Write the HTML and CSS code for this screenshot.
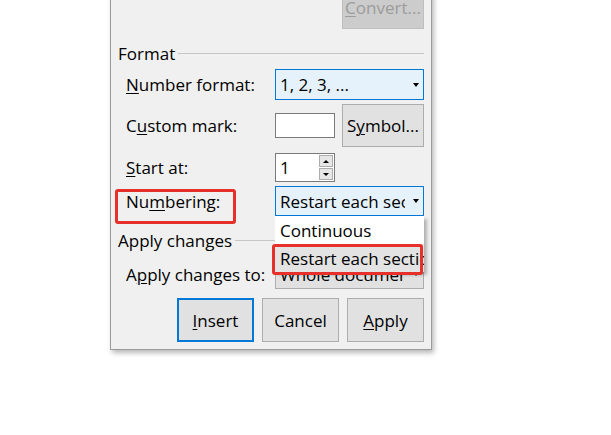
FILE: index.html
```html
<!DOCTYPE html>
<html>
<head>
<meta charset="utf-8">
<link rel="stylesheet" href="styles.css">
</head>
<body>
<div class="dialog">
  <div class="top-row">
    <div class="btn disabled convert"><u>C</u>onvert...</div>
  </div>

  <div class="legend legend-format"><span>Format</span><div class="rule"></div></div>

  <div class="row row-numfmt">
    <div class="label"><u>N</u>umber format:</div>
    <div class="combo active"><span class="combo-text">1, 2, 3, ...</span><span class="arrow"></span></div>
  </div>

  <div class="row row-custom">
    <div class="label">C<u>u</u>stom mark:</div>
    <div class="textbox small"></div>
    <div class="btn symbol">S<u>y</u>mbol...</div>
  </div>

  <div class="row row-start">
    <div class="label"><u>S</u>tart at:</div>
    <div class="spinner">
      <span class="spin-value">1</span>
      <div class="spin-btns">
        <div class="spin-btn"><span class="tri-up"></span></div>
        <div class="spin-btn"><span class="tri-down"></span></div>
      </div>
    </div>
  </div>

  <div class="row row-numbering">
    <div class="label marked">Nu<u>m</u>bering:</div>
    <div class="combo-wrap">
      <div class="combo active"><span class="combo-text">Restart each section</span><span class="arrow"></span></div>
      <div class="dropdown">
        <div class="item">Continuous</div>
        <div class="item selected">Restart each section</div>
        <div class="mark-item"></div>
      </div>
    </div>
  </div>

  <div class="legend legend-apply"><span>Apply changes</span><div class="rule"></div></div>

  <div class="row row-applyto">
    <div class="label">A<u>p</u>ply changes to:</div>
    <div class="combo plain"><span class="combo-text">Whole document</span><span class="arrow"></span></div>
  </div>

  <div class="buttons">
    <div class="btn default"><u>I</u>nsert</div>
    <div class="btn">Cancel</div>
    <div class="btn"><u>A</u>pply</div>
  </div>
</div>
</body>
</html>
```

FILE: styles.css
```css
* { box-sizing: border-box; }

html, body {
  margin: 0;
  padding: 0;
  background: #ffffff;
  overflow: hidden;
}

body {
  font-family: "Open Sans", "Noto Sans", "DejaVu Sans", sans-serif;
  font-size: 17px;
  color: #000000;
  width: 611px;
  height: 435px;
}

u {
  text-decoration: underline;
  text-decoration-thickness: 1px;
  text-underline-offset: 2px;
}

.dialog {
  margin: -16px 0 0 110px;
  width: 322px;
  background: #f0f0f0;
  border: 1px solid #9a9a9a;
  box-shadow: 2px 3px 5px rgba(0, 0, 0, 0.28);
  padding: 0 7px 7px 7px;
}

.top-row {
  display: flex;
  justify-content: flex-end;
}

.btn {
  width: 77px;
  height: 44px;
  display: flex;
  align-items: center;
  justify-content: center;
  background: #e1e1e1;
  border: 1px solid #adadad;
  white-space: nowrap;
}

.btn.disabled {
  background: #cccccc;
  border-color: #bfbfbf;
  color: #9c9c9c;
}

.btn.convert {
  width: 82px;
  height: 44px;
}

.legend {
  display: flex;
  align-items: center;
  height: 24px;
}

.legend .rule {
  flex: 1;
  height: 1px;
  background: #c6c6c6;
  margin-left: 3px;
}

.legend-format { margin-top: 12px; }
.legend-apply { margin-top: 12px; }

.row {
  display: flex;
  align-items: center;
  padding-left: 8px;
}

.label {
  width: 149px;
  height: 100%;
  display: flex;
  align-items: center;
  white-space: nowrap;
  position: relative;
}

.row-numfmt { height: 31px; margin-top: 4px; }
.row-custom { height: 43px; margin-top: 4px; }
.row-start { height: 29px; margin-top: 6px; }
.row-numbering { height: 30px; margin-top: 4px; }
.row-applyto { height: 30px; margin-top: 7px; }

.combo {
  width: 149px;
  height: 100%;
  display: flex;
  align-items: center;
  padding-left: 4px;
  border: 1px solid #adadad;
  background: #e1e1e1;
  position: relative;
}

.combo.active {
  border-color: #0078d7;
  background: #e5f1fb;
}

.combo-text {
  width: 125px;
  overflow: hidden;
  white-space: nowrap;
}

.arrow {
  position: absolute;
  right: 4px;
  top: 50%;
  margin-top: -2px;
  width: 0;
  height: 0;
  border-left: 3.5px solid transparent;
  border-right: 3.5px solid transparent;
  border-top: 4px solid #000000;
}

.textbox {
  background: #ffffff;
  border: 1px solid #7a7a7a;
}

.textbox.small {
  width: 60px;
  height: 25px;
}

.btn.symbol {
  width: 82px;
  height: 43px;
  margin-left: 7px;
}

.spinner {
  width: 60px;
  height: 29px;
  background: #ffffff;
  border: 1px solid #7a7a7a;
  display: flex;
  align-items: center;
  padding-left: 4px;
}

.spin-value {
  flex: 1;
}

.spin-btns {
  width: 14px;
  height: 25px;
  margin-right: 1px;
  display: flex;
  flex-direction: column;
  gap: 1px;
}

.spin-btn {
  flex: 1;
  background: #e6e6e6;
  border: 1px solid #adadad;
  display: flex;
  align-items: center;
  justify-content: center;
}

.tri-up {
  width: 0;
  height: 0;
  border-left: 3px solid transparent;
  border-right: 3px solid transparent;
  border-bottom: 3px solid #000000;
}

.tri-down {
  width: 0;
  height: 0;
  border-left: 3px solid transparent;
  border-right: 3px solid transparent;
  border-top: 3px solid #000000;
}

.label.marked::after {
  content: "";
  position: absolute;
  left: -11px;
  top: 3px;
  width: 115px;
  height: 29px;
  border: 3px solid #e8302a;
  border-radius: 3px;
}

.combo-wrap {
  width: 149px;
  height: 100%;
  position: relative;
}

.dropdown {
  position: absolute;
  left: 0;
  top: 100%;
  width: 149px;
  background: #ffffff;
  box-shadow: 3px 3px 3px rgba(0, 0, 0, 0.25);
  z-index: 5;
}

.dropdown .item {
  height: 28px;
  padding-left: 5px;
  display: flex;
  align-items: center;
  white-space: nowrap;
  overflow: hidden;
}

.dropdown .item.selected {
  background: #e3e3e3;
}

.mark-item {
  position: absolute;
  left: -3px;
  top: 28px;
  width: 151px;
  height: 31px;
  border: 3px solid #e8302a;
  border-radius: 3px;
}

.buttons {
  display: flex;
  justify-content: flex-end;
  gap: 8px;
  margin-top: 9px;
}

.btn.default {
  border: 2px solid #0078d7;
}
```
